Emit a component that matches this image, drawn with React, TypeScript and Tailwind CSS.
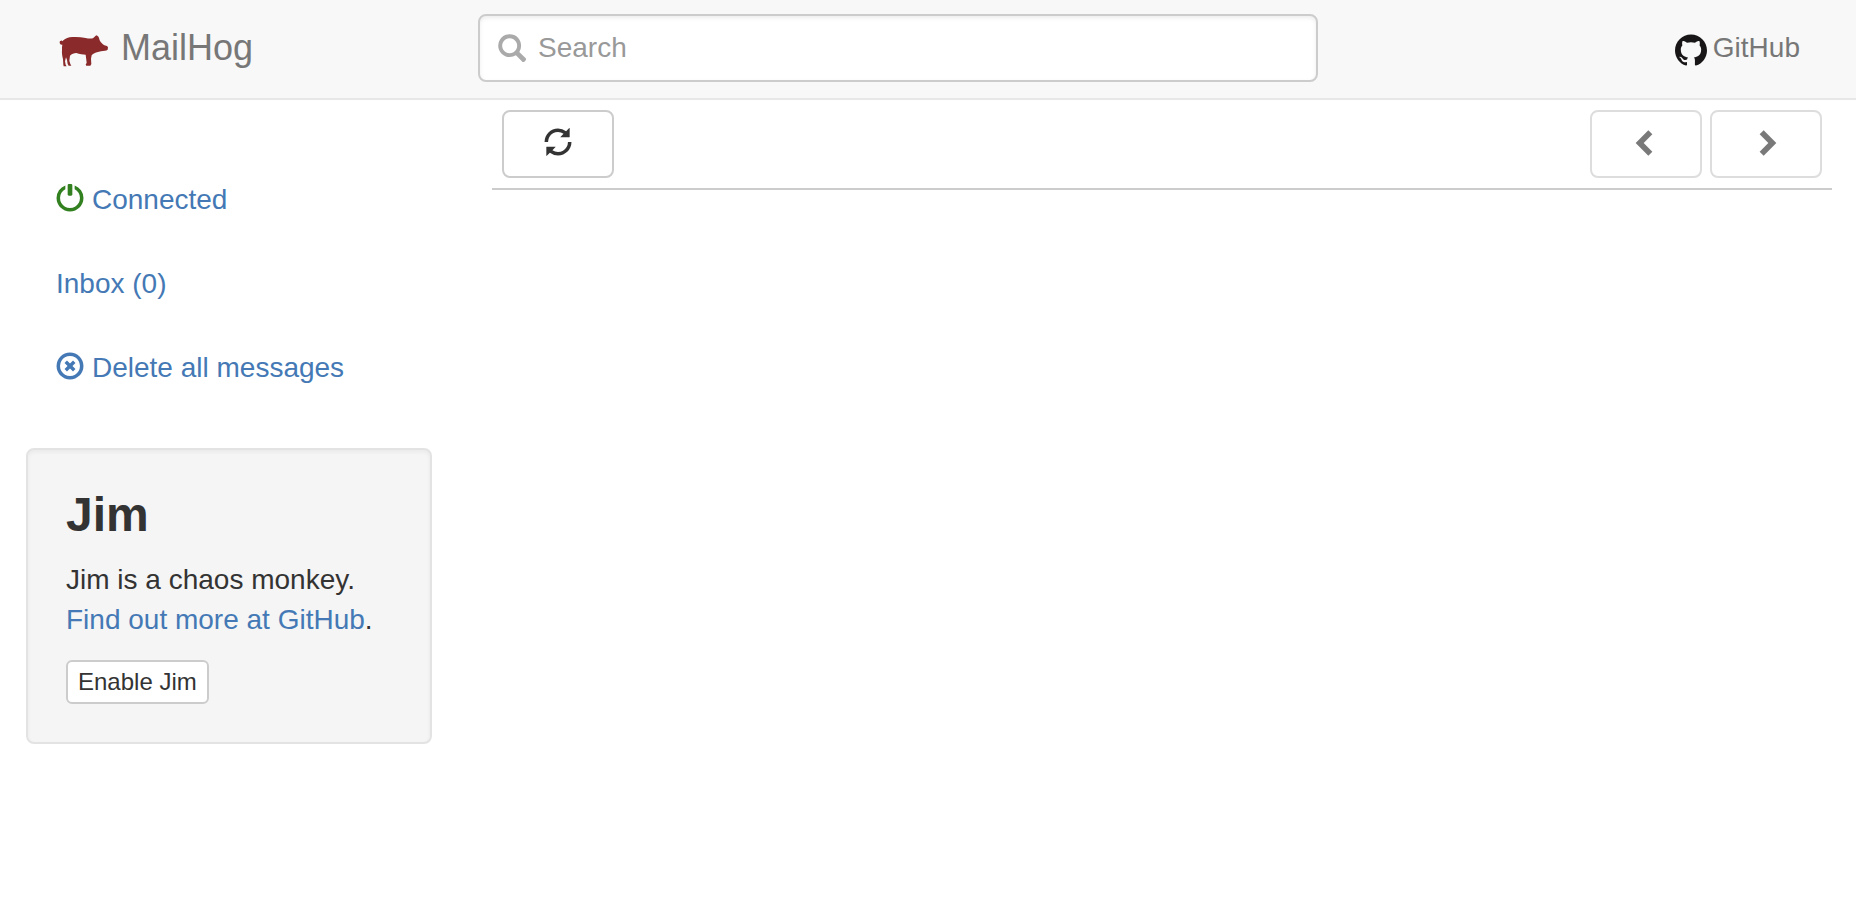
import React, { useState } from "react";
import { SiGithub } from "react-icons/si";

// Outlines on a 1200 unit grid, y axis pointing up
const GLYPHS = {
  search:
    "M500 1191q100 0 191 -39t156.5 -104.5t104.5 -156.5t39 -191l-1 -2l1 -5q0 -141 -78 -262l275 -274q23 -26 22.5 -44.5t-22.5 -42.5l-59 -58q-26 -20 -46.5 -20t-39.5 20l-275 274q-119 -77 -261 -77l-5 1l-2 -1q-100 0 -191 39t-156.5 104.5t-104.5 156.5t-39 191t39 191t104.5 156.5t156.5 104.5t191 39zM500 1022q-88 0 -162 -43t-117 -117t-43 -162t43 -162t117 -117t162 -43t162 43t117 117t43 162t-43 162t-117 117t-162 43z",
  refresh:
    "M947 1060l135 135q7 7 12.5 5t5.5 -13v-362q0 -10 -7.5 -17.5t-17.5 -7.5h-362q-11 0 -13 5.5t5 12.5l133 133q-109 76 -238 76q-116 0 -214.5 -57t-155.5 -155.5t-57 -214.5h-150q0 117 45.5 224t123 184.5t184.5 123t224 45.5q192 0 347 -117zM1027 600h150q0 -117 -45.5 -224t-123 -184.5t-184.5 -123t-224 -45.5q-192 0 -348 118l-134 -134q-7 -8 -12.5 -5.5t-5.5 12.5v360q0 11 7.5 18.5t17.5 7.5h361q10 0 12.5 -5.5t-4.5 -12.5l-134 -134q110 -76 240 -76q116 0 214.5 57t155.5 155.5t57 214.5z",
  power:
    "M550 1200h100q21 0 35.5 -14.5t14.5 -35.5v-400q0 -21 -14.5 -35.5t-35.5 -14.5h-100q-21 0 -35.5 14.5t-14.5 35.5v400q0 21 14.5 35.5t35.5 14.5zM800 975v166q167 -62 272 -209.5t105 -331.5q0 -117 -45.5 -224t-123 -184.5t-184.5 -123t-224 -45.5t-224 45.5t-184.5 123t-123 184.5t-45.5 224q0 184 105 331.5t272 209.5v-166q-103 -55 -165 -155t-62 -220q0 -116 57 -214.5t155.5 -155.5t214.5 -57t214.5 57t155.5 155.5t57 214.5q0 120 -62 220t-165 155z",
  removeCircle:
    "M600 1177q117 0 224 -45.5t184.5 -123t123 -184.5t45.5 -224t-45.5 -224t-123 -184.5t-184.5 -123t-224 -45.5t-224 45.5t-184.5 123t-123 184.5t-45.5 224t45.5 224t123 184.5t184.5 123t224 45.5zM600 1027q-116 0 -214.5 -57t-155.5 -155.5t-57 -214.5t57 -214.5t155.5 -155.5t214.5 -57t214.5 57t155.5 155.5t57 214.5t-57 214.5t-155.5 155.5t-214.5 57zM600 705l130 130l105 -105l-130 -130l130 -130l-105 -105l-130 130l-130 -130l-105 105l130 130l-130 130l105 105z",
  chevronLeft: "M157 600L700 1143L872 971L501 600L872 229L700 57z",
  chevronRight: "M1043 600L500 1143L328 971L699 600L328 229L500 57z",
};

const Glyph: React.FC<{ name: keyof typeof GLYPHS; className?: string }> = ({ name, className = "" }) => (
  <svg viewBox="0 0 1200 1200" className={`size-7 shrink-0 ${className}`} fill="currentColor" aria-hidden="true">
    <path fillRule="evenodd" transform="translate(0 1200) scale(1 -1)" d={GLYPHS[name]} />
  </svg>
);

const PigLogo: React.FC = () => (
  <svg viewBox="0 0 150 102" className="mt-1.5 h-[34px] w-[50px] shrink-0" fill="#8b2a2a" aria-hidden="true">
    <path d="M13 19C20 13 28 9 40 9C54 8 66 9 80 12C88 14 95 14 102 13L110 5Q113 2 115 5L119 9L122 19C125 25 130 30 136 34L144 36L147 40L146 47Q142 50 138 50C130 51 122 52 114 55C107 57 102 59 98 64L96 74L97 90L94 95H82L80 92L83 86L80 62C72 62 62 60 52 57C45 58 38 60 33 65L31 80L34 90L37 95H29L26 90L24 78L21 70L18 82L20 92L23 97H14L13 92L12 76C10 66 8 58 9 47C9 41 9 36 10 32Q3 33 2 27Q1 20 6 20Q9 19 11 22Z" />
  </svg>
);

const Header: React.FC = () => {
  const [query, setQuery] = useState("");

  return (
    <header className="grid grid-cols-[478fr_840fr_538fr] items-center border-b-2 border-[#e7e7e7] bg-[#f8f8f8] pt-3.5 pb-4">
      <a href="#" className="flex items-center gap-3 pl-[59px] text-4xl leading-10 text-[#777]">
        <PigLogo />
        MailHog
      </a>
      <form onSubmit={(e) => e.preventDefault()}>
        <label className="flex h-[68px] items-center gap-3 rounded-lg border-2 border-[#ccc] bg-white px-[18px] shadow-[inset_0_2px_4px_rgba(0,0,0,0.075)] focus-within:border-[#66afe9]">
          <Glyph name="search" className="text-[#aaa]" />
          <input
            type="text"
            aria-label="Search"
            placeholder="Search"
            value={query}
            onChange={(e) => setQuery(e.target.value)}
            className="min-w-0 flex-1 text-[28px] leading-10 text-[#555] outline-none placeholder:text-[#999]"
          />
        </label>
      </form>
      <a href="#" className="flex items-center justify-end gap-1.5 pr-14 text-[28px] leading-10 text-[#777]">
        <SiGithub className="mt-1 size-8 text-[#181616]" />
        GitHub
      </a>
    </header>
  );
};

const Sidebar: React.FC = () => {
  const [jimEnabled, setJimEnabled] = useState(false);

  return (
    <aside className="pt-[60px]">
      <nav>
        <ul className="space-y-1 text-[#4479b5]">
          <li>
            <a href="#" className="flex items-center gap-2 px-[30px] py-5">
              <Glyph name="power" className="mb-1 text-[#32801f]" />
              Connected
            </a>
          </li>
          <li>
            <a href="#" className="flex items-center px-[30px] py-5">
              Inbox (0)
            </a>
          </li>
          <li>
            <a href="#" className="flex items-center gap-2 px-[30px] py-5">
              <Glyph name="removeCircle" className="mb-1" />
              Delete all messages
            </a>
          </li>
        </ul>
      </nav>

      <section className="mt-10 rounded-lg border-2 border-[#e3e3e3] bg-[#f5f5f5] p-[38px] shadow-[inset_0_2px_4px_rgba(0,0,0,0.05)]">
        <h3 className="mb-[18px] text-5xl leading-[54px] font-bold">Jim</h3>
        <p className="mb-5">
          Jim is a chaos monkey.
          <br />
          <a href="#" className="text-[#4479b5]">
            Find out more at GitHub
          </a>
          .
        </p>
        <button
          onClick={() => setJimEnabled(!jimEnabled)}
          className="block rounded-md border-2 border-[#ccc] bg-white px-2.5 py-0.5 text-2xl leading-9 hover:bg-[#e6e6e6]"
        >
          {jimEnabled ? "Disable Jim" : "Enable Jim"}
        </button>
      </section>
    </aside>
  );
};

const ToolbarButton: React.FC<{ icon: keyof typeof GLYPHS; label: string; disabled?: boolean }> = ({
  icon,
  label,
  disabled,
}) => (
  <button
    aria-label={label}
    title={label}
    disabled={disabled}
    className="flex h-[68px] items-center rounded-lg border-2 border-[#ccc] bg-white px-10 enabled:hover:bg-[#e6e6e6] disabled:opacity-65"
  >
    <Glyph name={icon} className={disabled ? "mb-0.5" : "mb-1"} />
  </button>
);

const App: React.FC = () => (
  <div className="min-h-screen bg-white font-['Liberation_Sans',Arial,sans-serif] text-[28px] leading-10 text-[#333]">
    <Header />
    <div className="grid grid-cols-[406fr_1340fr] gap-[60px] pr-6 pl-[26px]">
      <Sidebar />
      <main>
        <div className="flex justify-between border-b-2 border-[#ccc] p-2.5">
          <ToolbarButton icon="refresh" label="Refresh" />
          <div className="flex gap-2">
            <ToolbarButton icon="chevronLeft" label="Previous" disabled />
            <ToolbarButton icon="chevronRight" label="Next" disabled />
          </div>
        </div>
      </main>
    </div>
  </div>
);

export default App;
